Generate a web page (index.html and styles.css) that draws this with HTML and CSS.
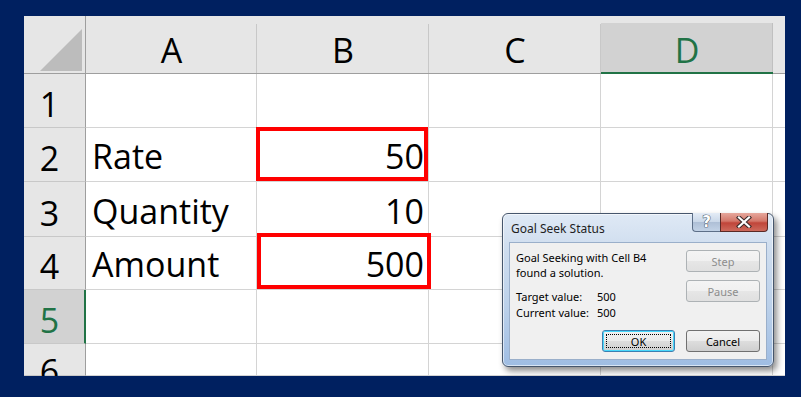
FILE: index.html
```html
<!DOCTYPE html>
<html>
<head>
<meta charset="utf-8">
<link rel="stylesheet" href="styles.css">
</head>
<body>
<div class="sheet">
  <div class="corner"><svg width="61" height="57" viewBox="0 0 61 57"><polygon points="16,55 58,55 58,13" fill="#bcbcbc"/></svg></div>
  <div class="ch">A</div><div class="ch">B</div><div class="ch">C</div><div class="ch sel">D</div><div class="ch end"></div>

  <div class="rh">1</div><div class="c"></div><div class="c"></div><div class="c"></div><div class="c"></div><div class="c end"></div>
  <div class="rh">2</div><div class="c">Rate</div><div class="c num boxed b2">50</div><div class="c"></div><div class="c"></div><div class="c end"></div>
  <div class="rh">3</div><div class="c">Quantity</div><div class="c num">10</div><div class="c"></div><div class="c"></div><div class="c end"></div>
  <div class="rh">4</div><div class="c">Amount</div><div class="c num boxed b4">500</div><div class="c"></div><div class="c"></div><div class="c end"></div>
  <div class="rh rsel">5</div><div class="c"></div><div class="c"></div><div class="c"></div><div class="c"></div><div class="c end"></div>
  <div class="rh top">6</div><div class="c"></div><div class="c"></div><div class="c"></div><div class="c"></div><div class="c end"></div>
</div>

<div class="dlg">
  <div class="titlebar">
    <span class="title">Goal Seek Status</span>
    <div class="tbtns">
      <div class="help">?</div>
      <div class="close"><svg width="16" height="12" viewBox="0 0 16 12"><path d="M3 1.5 L13 10.5 M13 1.5 L3 10.5" stroke="#3a2a2a" stroke-width="4.2" stroke-linecap="square"/><path d="M3 1.5 L13 10.5 M13 1.5 L3 10.5" stroke="#ffffff" stroke-width="2.2" stroke-linecap="square"/></svg></div>
    </div>
  </div>
  <div class="panel">
    <div class="upper">
      <div class="msg">
        <p class="lines">Goal Seeking with Cell B4<br>found a solution.</p>
        <div class="vrow"><span class="lbl">Target value:</span><span>500</span></div>
        <div class="vrow"><span class="lbl">Current value:</span><span>500</span></div>
      </div>
      <div class="side">
        <div class="btn dis">Step</div>
        <div class="btn dis">Pause</div>
      </div>
    </div>
    <div class="lower">
      <div class="btn ok"><span class="focus">OK</span></div>
      <div class="btn">Cancel</div>
    </div>
  </div>
</div>
</body>
</html>
```

FILE: styles.css
```css
html, body {
  margin: 0;
  padding: 0;
}
body {
  background: #002060;
  width: 801px;
  height: 397px;
  overflow: hidden;
  font-family: "Open Sans", "Noto Sans", sans-serif;
}
.sheet {
  margin: 16px 0 0 24px;
  width: 761px;
  height: 360px;
  overflow: hidden;
  background: #ffffff;
  display: grid;
  grid-template-columns: 62px 171px 172px 172px 172px 12px;
  grid-template-rows: 58px 54px 54px 55px 53px 54px 32px;
}
.corner {
  background: #e6e6e6;
  border-right: 1px solid #9e9e9e;
  border-bottom: 1px solid #9e9e9e;
  box-sizing: border-box;
}
.corner svg { display: block; }
.ch {
  box-sizing: border-box;
  background: linear-gradient(#c8c8c8, #c8c8c8) right bottom / 1px 49px no-repeat, #e6e6e6;
  border-bottom: 1px solid #9e9e9e;
  display: flex;
  align-items: flex-end;
  justify-content: center;
  font-size: 34px;
  line-height: 34px;
  padding-bottom: 6px;
  color: #000;
}
.ch.end { background: #e6e6e6; }
.ch.sel {
  background: linear-gradient(#c0c0c0, #c0c0c0) right bottom / 1px 49px no-repeat, linear-gradient(#d2d2d2, #d2d2d2) left bottom / 100% 49px no-repeat, #e6e6e6;
  border-bottom: 2px solid #217346;
  padding-bottom: 5px;
  color: #217346;
}
.rh {
  box-sizing: border-box;
  background: #e6e6e6;
  border-right: 1px solid #9e9e9e;
  border-bottom: 1px solid #c8c8c8;
  display: flex;
  align-items: flex-end;
  justify-content: center;
  padding-right: 10px;
  padding-bottom: 6px;
  font-size: 34px;
  line-height: 34px;
  color: #000;
}
.rh.rsel {
  background: #d2d2d2;
  border-right: 2px solid #217346;
  padding-right: 9px;
  color: #217346;
}
.rh.top {
  align-items: flex-start;
  padding-top: 10px;
  padding-bottom: 0;
}
.c {
  box-sizing: border-box;
  border-right: 1px solid #d4d4d4;
  border-bottom: 1px solid #d4d4d4;
  display: flex;
  align-items: flex-end;
  padding: 0 6px 8px 6px;
  font-size: 34px;
  line-height: 34px;
  color: #000;
}
.c.end { border-right: none; }
.c.num { justify-content: flex-end; padding-right: 4px; }
.c.boxed { position: relative; }
.c.boxed::after {
  content: "";
  position: absolute;
  border: 4px solid #ff0000;
}
.c.b2::after {
  left: -1px;
  top: -1px;
  right: 0;
  bottom: 0;
}
.c.b4::after {
  left: 0;
  top: -4px;
  right: -3px;
  bottom: 0;
}

/* dialog */
.dlg {
  position: absolute;
  left: 502px;
  top: 213px;
  width: 272px;
  height: 154px;
  box-sizing: border-box;
  border: 1px solid #46566c;
  border-radius: 6px;
  background: linear-gradient(#dfe9f5 0%, #cddcee 25%, #bcd1ea 60%, #9fbde3 100%);
  box-shadow: 3px 4px 6px rgba(0, 0, 0, 0.45), inset 0 0 0 1px rgba(255, 255, 255, 0.6);
  font-family: "Noto Sans", "Open Sans", sans-serif;
  font-size: 11px;
  color: #000;
  display: flex;
  flex-direction: column;
}
.titlebar {
  height: 28px;
  display: flex;
  align-items: center;
  padding: 0 5px 0 8px;
}
.title {
  font-size: 12px;
  color: #1e1e1e;
  padding-top: 1px;
}
.tbtns {
  margin-left: auto;
  align-self: flex-start;
  margin-top: -1px;
  display: flex;
  height: 19px;
}
.help {
  width: 28px;
  box-sizing: border-box;
  border: 1px solid #5d6f88;
  border-top: none;
  border-right: none;
  border-radius: 0 0 0 4px;
  background: linear-gradient(#e4ecf6, #c9d7e8 50%, #aebfd6 51%, #c2d2e6);
  color: #ffffff;
  font-family: "DejaVu Sans", sans-serif;
  font-weight: bold;
  font-size: 15px;
  line-height: 18px;
  text-align: center;
  -webkit-text-stroke: 0.6px #2f3b4c;
  paint-order: stroke fill;
  text-shadow: 0 0 1px #2f3b4c;
}
.close {
  width: 48px;
  box-sizing: border-box;
  border: 1px solid #5a2a26;
  border-top: none;
  border-radius: 0 0 4px 0;
  background: linear-gradient(#e6a79c, #d3776a 45%, #c0453a 55%, #cd6a5c);
  display: flex;
  align-items: center;
  justify-content: center;
}
.close svg { display: block; }
.panel {
  margin: 0 6px;
  height: 118px;
  box-sizing: border-box;
  border: 1px solid #9aafca;
  background: #f0f0f0;
  padding: 7px 6px 7px 6px;
  display: flex;
  flex-direction: column;
  justify-content: space-between;
}
.upper {
  display: flex;
  justify-content: space-between;
}
.lines {
  margin: 0 0 9px 0;
  line-height: 15px;
}
.vrow {
  display: flex;
  line-height: 16px;
}
.lbl { width: 81px; }
.side {
  display: flex;
  flex-direction: column;
  gap: 8px;
}
.btn {
  width: 74px;
  height: 22px;
  box-sizing: border-box;
  border: 1px solid #707070;
  border-radius: 3px;
  background: linear-gradient(#f2f2f2, #ebebeb 50%, #dddddd 51%, #cfcfcf);
  display: flex;
  align-items: center;
  justify-content: center;
  font-size: 11px;
  color: #000;
}
.btn.dis {
  border-color: #adb2b5;
  background: linear-gradient(#f4f4f4, #f0f0f0 50%, #e6e6e6 51%, #e0e0e0);
  color: #8d8d8d;
}
.lower {
  display: flex;
  justify-content: flex-end;
  gap: 11px;
}
.btn.ok {
  width: 73px;
  border-color: #3c7fb1;
  box-shadow: inset 0 0 0 1px #48d8fb;
  padding: 3px;
}
.focus {
  flex: 1;
  align-self: stretch;
  border: 1px dotted #000;
  display: flex;
  align-items: center;
  justify-content: center;
}
```
